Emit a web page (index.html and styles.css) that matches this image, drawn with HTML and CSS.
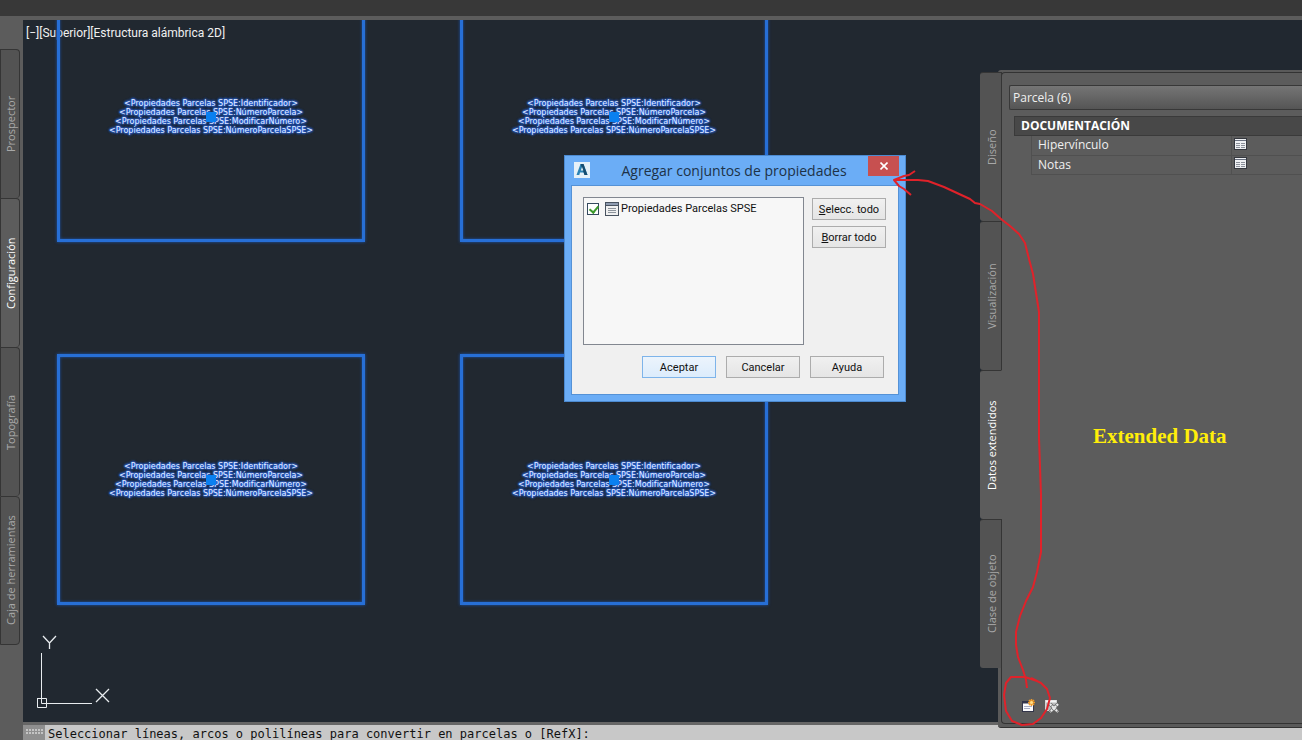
FILE: index.html
```html
<!DOCTYPE html>
<html lang="es">
<head>
  <meta charset="UTF-8" />
  <meta name="viewport" content="width=device-width, initial-scale=1.0"/>
  <title>Agregar conjuntos de propiedades</title>
  <link rel="stylesheet" href="styles.css">
</head>
<body>
  <div class="topbar"></div>
  <div class="main">
    <nav class="side-tabs">
      <button class="tab">Prospector</button>
      <button class="tab active">Configuración</button>
      <button class="tab">Topografía</button>
      <button class="tab">Caja de herramientas</button>
    </nav>
    <div class="workspace">
      <div class="drawing">
        <div class="view-label">[−][Superior][Estructura alámbrica 2D]</div>

        <div class="parcel col-1 row-1">
          <p>&lt;Propiedades Parcelas SPSE:Identificador&gt;</p>
          <p>&lt;Propiedades Parcelas SPSE:NúmeroParcela&gt;</p>
          <p>&lt;Propiedades Parcelas SPSE:ModificarNúmero&gt;</p>
          <p>&lt;Propiedades Parcelas SPSE:NúmeroParcelaSPSE&gt;</p>
          <span class="grip"></span>
        </div>
        <div class="parcel col-2 row-1">
          <p>&lt;Propiedades Parcelas SPSE:Identificador&gt;</p>
          <p>&lt;Propiedades Parcelas SPSE:NúmeroParcela&gt;</p>
          <p>&lt;Propiedades Parcelas SPSE:ModificarNúmero&gt;</p>
          <p>&lt;Propiedades Parcelas SPSE:NúmeroParcelaSPSE&gt;</p>
          <span class="grip"></span>
        </div>
        <div class="parcel col-1 row-2">
          <p>&lt;Propiedades Parcelas SPSE:Identificador&gt;</p>
          <p>&lt;Propiedades Parcelas SPSE:NúmeroParcela&gt;</p>
          <p>&lt;Propiedades Parcelas SPSE:ModificarNúmero&gt;</p>
          <p>&lt;Propiedades Parcelas SPSE:NúmeroParcelaSPSE&gt;</p>
          <span class="grip"></span>
        </div>
        <div class="parcel col-2 row-2">
          <p>&lt;Propiedades Parcelas SPSE:Identificador&gt;</p>
          <p>&lt;Propiedades Parcelas SPSE:NúmeroParcela&gt;</p>
          <p>&lt;Propiedades Parcelas SPSE:ModificarNúmero&gt;</p>
          <p>&lt;Propiedades Parcelas SPSE:NúmeroParcelaSPSE&gt;</p>
          <span class="grip"></span>
        </div>

        <!-- UCS axes -->
        <svg class="ucs" width="80" height="76" viewBox="0 0 80 76" fill="none" stroke="#e8ecef" stroke-width="1">
          <path d="M5.500 18V68.500H56M1 63.500H10.500V72.500H1.500V63.500"/>
          <path d="M7 1L13.500 8L20 1M13.500 8V14M60 54L73 67M73 54L60 67" stroke-width="1.300"/>
        </svg>
      </div>
      <div class="command">
        <svg class="handle" width="22" height="15" viewBox="0 0 22 15">
          <path d="M3 5H20M3 8H20" stroke="#c4c4c4" stroke-width="2" stroke-dasharray="2 1"/>
        </svg>
        <span>Seleccionar líneas, arcos o polilíneas para convertir en parcelas o [RefX]:</span>
      </div>
    </div>
  </div>

  <aside class="palette">
    <nav class="palette-tabs">
      <button class="tab">Diseño</button>
      <button class="tab">Visualización</button>
      <button class="tab active">Datos extendidos</button>
      <button class="tab">Clase de objeto</button>
    </nav>
    <div class="palette-frame">
      <div class="palette-body">
        <select class="object-type" aria-label="Tipo de objeto">
          <option>Parcela (6)</option>
        </select>
        <div class="category">DOCUMENTACIÓN</div>
        <table class="props">
          <tr>
            <th scope="row">Hipervínculo</th>
            <td>
              <svg width="13" height="12" viewBox="0 0 13 12"><rect x=".5" y=".5" width="12" height="11" fill="#eef0f3" stroke="#35383f"/><path d="M1 2.500H12" stroke="#6a7180"/><path d="M2 5.500H6M7 5.500H11M2 7.500H6M7 7.500H11M2 9.500H6M7 9.500H11" stroke="#8a8f99"/></svg>
            </td>
          </tr>
          <tr>
            <th scope="row">Notas</th>
            <td>
              <svg width="13" height="12" viewBox="0 0 13 12"><rect x=".5" y=".5" width="12" height="11" fill="#eef0f3" stroke="#35383f"/><path d="M1 2.500H12" stroke="#6a7180"/><path d="M2 5.500H6M7 5.500H11M2 7.500H6M7 7.500H11M2 9.500H6M7 9.500H11" stroke="#8a8f99"/></svg>
            </td>
          </tr>
        </table>
        <div class="note">Extended Data</div>
        <div class="palette-tools">
          <button aria-label="Agregar conjuntos de propiedades">
            <svg width="14" height="14" viewBox="0 0 14 14"><rect x=".5" y="2.500" width="11" height="10" fill="#fafafc" stroke="#33354a"/><path d="M0 3.500H8" stroke="#33354a" stroke-width="2"/><path d="M2 7.500H10M2 9.500H8" stroke="#a9aec4"/><path d="M9.500 0V7M6 3.500H13M7 1L12 6M12 1L7 6" stroke="#f09a28" stroke-width="1.600"/><circle cx="9.500" cy="3.500" r="1.500" fill="#ffe08a"/></svg>
          </button>
          <button aria-label="Eliminar conjuntos de propiedades">
            <svg width="14" height="14" viewBox="0 0 14 14"><rect x=".5" y="1.500" width="11" height="10" fill="#bcbcbc" stroke="#d6d6d6"/><path d="M1 2.500H11" stroke="#f4f4f4" stroke-width="2"/><path d="M5 5L13 13M13 5L5 13" stroke="#666" stroke-width="3.500"/><path d="M5 5L13 13M13 5L5 13" stroke="#ececec" stroke-width="2.200" stroke-dasharray="2 .7"/></svg>
          </button>
        </div>
      </div>
    </div>
  </aside>

  <div class="dialog" role="dialog" aria-labelledby="dialogTitle">
    <div class="titlebar">
      <svg class="app-icon" width="16" height="16" viewBox="0 0 16 16">
        <rect width="16" height="16" fill="#e6f1f8"/>
        <path d="M2.500 13L6.500 2H9.500L13.500 13H10.500L9.800 10.500H6L5.300 13Z" fill="#2b83b4"/>
        <path d="M6.500 2H9.500L13.500 13H10.500Z" fill="#164d70"/>
        <path d="M8 5L9.300 8.500H6.800Z" fill="#e6f1f8"/>
      </svg>
      <h1 id="dialogTitle">Agregar conjuntos de propiedades</h1>
      <button class="close" aria-label="Cerrar">
        <svg width="8" height="8" viewBox="0 0 8 8"><path d="M.5 .5L7.500 7.500M7.500 .5L.5 7.500" stroke="#fff" stroke-width="1.600"/></svg>
      </button>
    </div>
    <div class="client">
      <div class="choices">
        <div class="set-list">
          <label>
            <input type="checkbox" checked>
            <svg width="14" height="14" viewBox="0 0 14 14"><rect x=".5" y=".5" width="13" height="13" fill="#f0f0f0" stroke="#48525f"/><rect x="1" y="1" width="12" height="2" fill="#8e9bb0"/><path d="M1 3.500H13" stroke="#48525f"/><path d="M3 6.500H11M3 8.500H11M3 10.500H11" stroke="#8d949c"/></svg>
            <span>Propiedades Parcelas SPSE</span>
          </label>
        </div>
        <div class="list-buttons">
          <button class="btn"><u>S</u>elecc. todo</button>
          <button class="btn"><u>B</u>orrar todo</button>
        </div>
      </div>
      <div class="actions">
        <button class="btn default">Aceptar</button>
        <button class="btn">Cancelar</button>
        <button class="btn">Ayuda</button>
      </div>
    </div>
  </div>

  <!-- hand drawn arrow from the tool icon to the dialog -->
  <svg class="markup" width="170" height="570" viewBox="890 165 170 570" fill="none" stroke="#e0222a" stroke-width="2" stroke-linejoin="round">
    <path d="M1027 688L1026 680L1023 670L1018 657L1016 645L1016 632L1020 616L1026 601L1033 587L1037 572L1041 552V495L1039 438V312L1036 293L1033 274L1029 259L1025 243L1019 234L1010 226L1001 219L992 211L980 204L975 203L970 199L957 193L944 187L928 181L918 180L894 180"/>
    <path d="M915 171L909 175L904 176L894 180L899 186L904 189L911 195"/>
    <path d="M1037 681L1025 677L1011 677L1006 683L1004 695L1006 711L1012 721L1022 725L1033 724L1041 718L1047 709L1050 698L1047 689L1041 683L1031 678"/>
  </svg>
</body>
</html>
```
FILE: styles.css
```css
* { margin: 0; padding: 0; box-sizing: border-box; }
body {
  display: flex;
  flex-direction: column;
  height: 100vh;
  overflow: hidden;
  position: relative;
  background: #5c5c5c;
  color: #f0f0f0;
  font-family: "Open Sans", "Noto Sans", sans-serif;
  font-size: 12px;
}
button, select {
  font: inherit;
  color: inherit;
  background: none;
  border: none;
}
svg { display: block; }

.topbar {
  height: 16px;
  flex: none;
  background: #383838;
}
.main {
  display: flex;
  flex: 1;
  min-height: 0;
}

/* vertical tabs */
.side-tabs {
  width: 23px;
  flex: none;
  display: flex;
  flex-direction: column;
  align-items: flex-start;
  padding-top: 33px;
}
.tab {
  width: 20px;
  height: 149px;
  writing-mode: vertical-rl;
  transform: rotate(180deg);
  text-align: center;
  font-size: 11px;
  line-height: 20px;
  background: #535353;
  color: #a8a8a8;
  border: 1px solid #353535;
  border-top-width: 0;
  border-radius: 4px 0 0 4px;
}
.tab:last-child { border-top-width: 1px; }
.tab.active {
  background: #5c5c5c;
  color: #fff;
}

.workspace {
  flex: 1;
  min-width: 0;
  display: flex;
  flex-direction: column;
  border-top: 4px solid #5c5c5c;
}
.drawing {
  flex: 1;
  position: relative;
  overflow: hidden;
  background: #212830;
}
.view-label {
  padding: 5px 3px;
  font-family: Roboto, sans-serif;
  line-height: 17px;
}
.parcel {
  position: absolute;
  width: 308px;
  height: 251px;
  display: flex;
  flex-direction: column;
  align-items: center;
  justify-content: center;
  border: 3px solid #276fd6;
  box-shadow: 0 0 3px #1c55b0, inset 0 0 3px #1c55b0;
  color: #e4eeff;
  font: 8px/9px "DejaVu Sans", sans-serif;
  white-space: nowrap;
  text-shadow: 0 0 2px #2a6cf0, 0 0 2px #2a6cf0, 0 0 3px #2a6cf0, 0 0 3px #2a6cf0;
}
.col-1 { left: 34px; }
.col-2 { left: 437px; }
.row-1 { top: -29px; }
.row-2 { top: 334px; }
.grip {
  position: absolute;
  top: 50%;
  left: 50%;
  width: 10px;
  height: 10px;
  margin: -5px;
  background: #0a80f0;
}
.ucs {
  position: absolute;
  left: 13px;
  bottom: 11px;
}
.command {
  height: 18px;
  flex: none;
  display: flex;
  overflow: hidden;
  border-top: 3px solid #666;
  background: #c8c8c8;
  color: #111;
  font: 12px/18px "DejaVu Sans Mono", monospace;
  white-space: nowrap;
}
.handle {
  flex: none;
  margin-right: 3px;
  background: #8f8f8f;
}

/* properties palette */
.palette {
  position: absolute;
  top: 70px;
  right: 0;
  bottom: 12px;
  width: 322px;
  display: flex;
}
.palette-tabs {
  width: 22px;
  flex: none;
  margin-right: -4px;
  padding-top: 2px;
  z-index: 1;
}
.palette-tabs .tab {
  display: block;
  width: 22px;
  line-height: 24px;
  border-width: 0 0 1px 1px;
  border-radius: 0 3px 3px 0;
}
.palette-tabs .tab.active { border-left-color: #5c5c5c; }
.palette-frame {
  flex: 1;
  display: flex;
  padding: 2px 0 3px 3px;
  background: #5a5a5a;
  border-bottom: 1px solid #333;
  border-radius: 3px 0 0 3px;
}
.palette-body {
  flex: 1;
  display: flex;
  flex-direction: column;
  padding: 12px 0 10px 7px;
  border: 1px solid #333;
  border-right: none;
  border-radius: 4px 0 0 4px;
  background: #5c5c5c;
}
.object-type {
  appearance: none;
  height: 25px;
  flex: none;
  padding: 0 3px;
  border: 1px solid #383838;
  border-right: none;
  border-radius: 2px 0 0 2px;
  background: linear-gradient(#757575, #555);
}
.category {
  margin: 6px 0 0 5px;
  padding-left: 6px;
  border: 1px solid #3a3a3a;
  border-right: none;
  background: #484848;
  color: #fff;
  font-weight: bold;
  line-height: 18px;
}
.props {
  margin-left: 22px;
  border-collapse: collapse;
}
.props th,
.props td {
  height: 19px;
  padding: 0 2px;
  border: 1px solid #505050;
  border-top: none;
  border-right: none;
  line-height: 18px;
}
.props th {
  width: 200px;
  padding-left: 6px;
  font-weight: normal;
  text-align: left;
}
.props svg { margin-bottom: 3px; }
.note {
  flex: 1;
  display: flex;
  align-items: center;
  padding-left: 84px;
  color: #ffee0a;
  font: bold 21px "Liberation Serif", "Times New Roman", serif;
}
.palette-tools {
  display: flex;
  gap: 9px;
  padding-left: 13px;
}

/* dialog */
.dialog {
  position: absolute;
  top: 155px;
  left: 564px;
  width: 342px;
  padding: 0 6px 6px;
  border: 1px solid #4c8ad0;
  background: #6badf6;
  color: #111;
  font-family: Roboto, sans-serif;
  font-size: 11px;
}
.titlebar {
  display: flex;
  height: 29px;
}
.app-icon { margin: 6px 0 0 3px; }
.titlebar h1 {
  flex: 1;
  padding-left: 10px;
  text-align: center;
  color: #1d3247;
  font-family: "Open Sans", sans-serif;
  font-size: 14px;
  font-weight: normal;
  line-height: 30px;
}
.close {
  width: 31px;
  height: 20px;
  display: flex;
  align-items: center;
  justify-content: center;
  background: #c75050;
}
.client {
  padding: 11px 12px 16px 11px;
  border: 1px solid #5592d6;
  background: #f0f0f0;
}
.choices {
  display: flex;
  gap: 8px;
}
.set-list {
  flex: 1;
  height: 148px;
  padding: 3px;
  border: 1px solid #828790;
  background: #f7f7f7;
}
.set-list label {
  display: flex;
  align-items: center;
  line-height: 15px;
}
.set-list input {
  appearance: none;
  width: 12px;
  height: 12px;
  margin-right: 6px;
  border: 1px solid #34495e;
  background: #fff;
}
.set-list input:checked::before {
  content: "";
  display: block;
  width: 4px;
  height: 7px;
  margin: 0 3px;
  border: solid #3c9a2c;
  border-width: 0 2px 2px 0;
  transform: rotate(40deg);
}
.set-list svg { margin-right: 2px; }
.list-buttons {
  display: flex;
  flex-direction: column;
  gap: 6px;
  padding-top: 1px;
}
.btn {
  width: 74px;
  height: 22px;
  border: 1px solid #acacac;
  background: linear-gradient(#f0f0f0, #e5e5e5);
  white-space: nowrap;
}
.btn.default {
  border-color: #7eb4ea;
  background: linear-gradient(#ecf4fc, #dcecfc);
}
.actions {
  display: flex;
  justify-content: flex-end;
  gap: 10px;
  padding: 11px 2px 0 0;
}

.markup {
  position: absolute;
  top: 165px;
  left: 890px;
  z-index: 2;
  pointer-events: none;
}
```
